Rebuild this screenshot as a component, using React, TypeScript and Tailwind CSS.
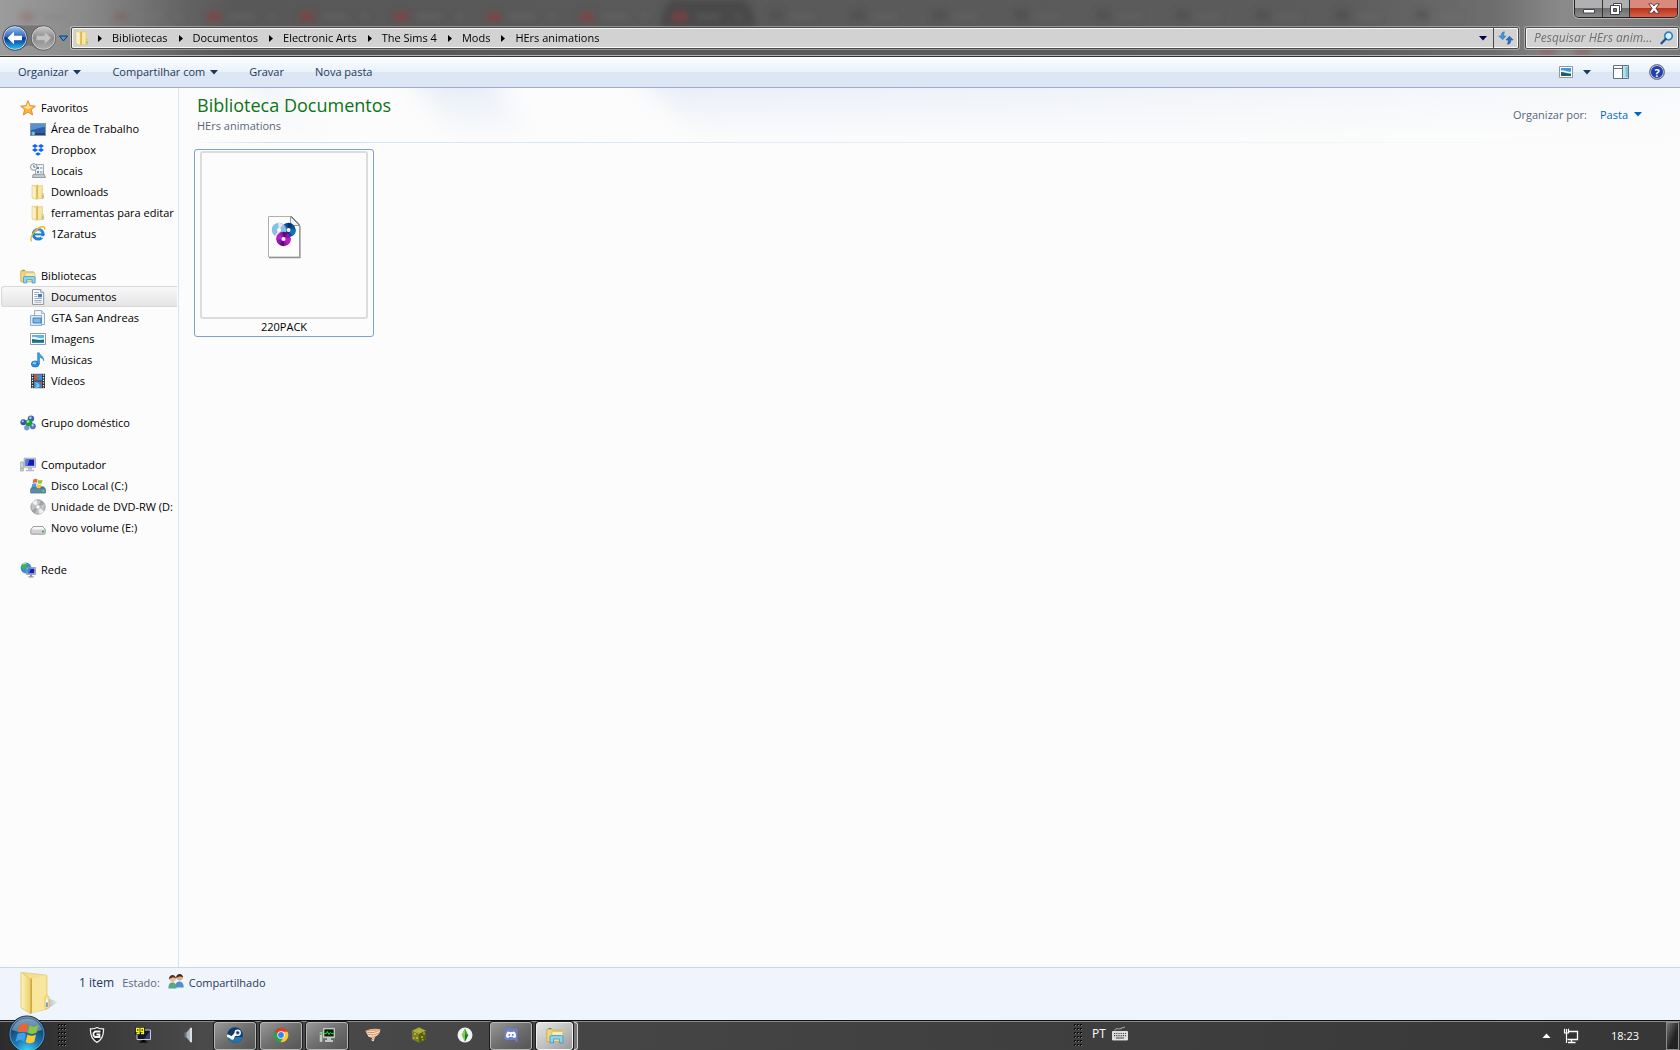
import type { ReactNode } from "react";
import clsx from "clsx";

interface IconProps {
  size?: number;
}

interface NavEntry {
  label: string;
  icon: ReactNode;
  selected?: boolean;
}

interface NavGroup extends NavEntry {
  items: NavEntry[];
}

function Svg({ size = 16, box = "0 0 16 16", children }: { size?: number; box?: string; children: ReactNode }) {
  return (
    <svg width={size} height={size} viewBox={box} className="shrink-0" aria-hidden="true">
      {children}
    </svg>
  );
}

function FolderIcon({ size = 16 }: IconProps) {
  return (
    <Svg size={size}>
      <path d="M2 1.2 8 .4v1l4.600 .3v13l-4.600 .5-6-.8z" fill="#efdc8e" />
      <path d="M7.500 2.200 12.300 1.500v12.700l-4.800.8z" fill="#f6e7a6" stroke="#d9bf66" strokeWidth=".5" />
      <path d="M2 1.1 6.300 2.600V15.600L2 13.600z" fill="#fbf1c0" stroke="#d9bf66" strokeWidth=".5" />
      <path d="M6.300 2.600 8 .8v13l-1.700 1.800z" fill="#d8b955" />
      <path d="M12 9.500h1.600v5l-1.600.4z" fill="#f5e6a0" stroke="#c9a646" strokeWidth=".4" />
      <path d="M12.400 11.500h.9v2h-.9z" fill="#4aa3e0" />
    </Svg>
  );
}

function StarIcon() {
  return (
    <Svg>
      <path d="m8 .7 2.100 5 5.300.4-4 3.500 1.200 5.300L8 12.100l-4.700 2.800 1.300-5.300-4-3.500 5.300-.4z" fill="#ffb23e" stroke="#dc7c1c" strokeWidth=".8" strokeLinejoin="round" />
      <path d="m8 2.500 1.500 4 3.600.3L8 9.300 3 6.800l3.500-.3z" fill="#ffe79c" />
    </Svg>
  );
}

function DesktopIcon() {
  return (
    <Svg>
      <rect x=".5" y="2.500" width="15" height="12" fill="#2e5fa8" stroke="#8e99a8" />
      <path d="M1 3h14v3C9 6 5 9 1 9z" fill="#5a91d2" />
      <path d="M1 12.200h14V14H1z" fill="#263f66" />
      <circle cx="3.200" cy="12.400" r="1.800" fill="#61c0e8" />
      <path d="M2.400 11.600h.8v.8h-.8z" fill="#f59231" />
      <path d="M3.400 12.400h.9v.9h-.9z" fill="#ffe14d" />
    </Svg>
  );
}

function DropboxIcon() {
  return (
    <Svg>
      <path d="m5 2 3 1.900-3 2-3-2zM11 2l3 1.900-3 2-3-2zM5 6.100l3 1.900-3 2-3-2zM11 6.100l3 1.900-3 2-3-2zM8 10.200l3 1.700-3 1.900-3-1.900z" fill="#0f63ff" />
    </Svg>
  );
}

function RecentIcon() {
  return (
    <Svg>
      <path d="M5.500 1.500h8v10h-8z" fill="#f3f6f9" stroke="#8d949b" strokeWidth=".8" />
      <path d="M7 4h2v2H7zM7 8h2v2H7z" fill="#4d8fd6" />
      <path d="M10 5h2.500M10 9h2.500" stroke="#7f8b98" />
      <path d="m3 11.500 11-.5 1.500 3.500h-13z" fill="#c4c8cc" stroke="#868c92" strokeWidth=".8" />
      <circle cx="3.800" cy="4" r="3.300" fill="#f6f7f8" stroke="#8f959b" />
      <path d="M3.800 2v2.200h1.700" fill="none" stroke="#555" strokeWidth=".8" />
    </Svg>
  );
}

function BrowserIcon() {
  return (
    <Svg>
      <circle cx="8.200" cy="8.300" r="4.800" fill="none" stroke="#1c84d8" strokeWidth="3" />
      <path d="M5 8.400h9.500" stroke="#1c84d8" strokeWidth="2" />
      <path d="M11 10.200h5v1.600h-5z" fill="#fcfcfc" />
      <path d="M5 5.500C6.500 4 9.500 3.800 11 5.200" fill="none" stroke="#7cc6f5" strokeWidth="1" />
      <path d="M1.600 15.200C-1 12 5 3.200 11 1c3-1 4.200.4 3.400 2.800" fill="none" stroke="#f2b51f" strokeWidth="1.400" />
    </Svg>
  );
}

function LibraryIcon({ size = 16 }: IconProps) {
  return (
    <Svg size={size}>
      <path d="M.7 2.800h4.400l1 1h7.400v10H.7z" fill="#efd57b" stroke="#c9a94d" strokeWidth=".7" />
      <path d="M2.300 1.800h2.500v1H2.300z" fill="#37a84b" />
      <path d="M5.200 4.800h9.800v8.500H5.200z" fill="#faedb0" stroke="#d1b45c" strokeWidth=".6" />
      <path d="M3.500 15V9.700q0-1.200 1.300-1.200h9q1.300 0 1.300 1.200V15h-3v-3.400H6.700V15z" fill="#8fd3f2" stroke="#4699c7" strokeWidth=".8" />
    </Svg>
  );
}

function DocumentIcon() {
  return (
    <Svg>
      <path d="M2.500.6h8.200l3 3v11.800H2.500z" fill="#fdfdfe" stroke="#7b8794" strokeWidth=".9" />
      <path d="M10.700.6v3h3" fill="#dfe5eb" stroke="#7b8794" strokeWidth=".8" />
      <path d="M4.300 3.500h4.500M4.300 5.500h3M4.300 7.500h3M4.300 9.500h7.500M4.300 11.500h7.500M4.300 13.200h7.500" stroke="#93a3b3" strokeWidth=".9" />
      <path d="M8 5h4v3.300H8z" fill="#3b7dc0" />
    </Svg>
  );
}

function GameLibraryIcon() {
  return (
    <Svg>
      <path d="M4.500.6h7l3 3v11H4.500z" fill="#f3f8fd" stroke="#8aa4bf" strokeWidth=".9" />
      <path d="M11.500.6v3h3" fill="#d7e5f2" stroke="#8aa4bf" strokeWidth=".8" />
      <path d="M.6 5.600h11v9.800H.6z" fill="#e6f1fb" stroke="#7d9dbd" strokeWidth=".9" />
      <path d="M3 8h8v5H3z" fill="#79b9ec" stroke="#2f79b8" strokeWidth=".9" />
    </Svg>
  );
}

function PictureIcon() {
  return (
    <Svg>
      <path d="M.5 2.500h15v11H.5z" fill="#fff" stroke="#939ba4" />
      <path d="M2 4h12v8H2z" fill="#5bb0ea" />
      <path d="M2 6.200c4-1.600 7 2 12 .6V9H2z" fill="#e6f5fd" />
      <path d="M2 8c3 0 5 1.500 12 .6V12H2z" fill="#1d6f6d" />
      <path d="M2 10.800h12V12H2z" fill="#2a8ac0" />
    </Svg>
  );
}

function MusicIcon() {
  return (
    <Svg>
      <ellipse cx="5.200" cy="12" rx="3.900" ry="3.100" fill="#2b8fdb" stroke="#1566ad" strokeWidth=".6" />
      <path d="M7.600.8h1.700c.4 2.600 4.600 3.200 4.500 8-1-2.400-2.400-3.200-4.300-3.500V12H7.600z" fill="#3da0e6" stroke="#1566ad" strokeWidth=".5" />
      <ellipse cx="4.400" cy="11.200" rx="1.800" ry="1" fill="#9bd7fa" />
    </Svg>
  );
}

function VideoIcon() {
  return (
    <Svg>
      <path d="M1 .8h14v14.400H1z" fill="#2e3338" />
      <path d="M4 1.200h8v6.200H4zM4 8.600h8v6.200H4z" fill="#3c8ed1" />
      <path d="M4 1.200h4l-2 3 4 3H4zM9 10l3-1.400v5z" fill="#b8573a" />
      <path d="m5 9 3 1 2 3-2 1.800H5l1.500-3z" fill="#6bc4f2" />
      <path d="M2.500 1.500v14M13.500 1.500v14" stroke="#eef2f5" strokeWidth="1.300" strokeDasharray="1.300 1.300" />
    </Svg>
  );
}

function HomegroupIcon() {
  return (
    <Svg>
      <circle cx="11" cy="3.600" r="3.200" fill="#3e62c0" />
      <circle cx="3.400" cy="7.200" r="3" fill="#3052b4" />
      <circle cx="12.800" cy="11.200" r="3" fill="#5373c8" />
      <circle cx="6.800" cy="12.700" r="2.700" fill="#7b98d8" />
      <circle cx="8.900" cy="7.800" r="3.500" fill="#1d9b3b" />
      <circle cx="8" cy="6.600" r="1.400" fill="#9be58e" />
      <circle cx="10.400" cy="2.800" r="1.200" fill="#b7cbf7" />
      <circle cx="2.700" cy="6.300" r="1.100" fill="#b7cbf7" />
      <circle cx="12.600" cy="10.300" r="1.100" fill="#d0defc" />
    </Svg>
  );
}

function ComputerIcon() {
  return (
    <Svg>
      <path d="M.7 5h2.600v9H.7z" fill="#dbdfe3" stroke="#8c9298" strokeWidth=".7" />
      <path d="M1.400 10.500h1v1.500h-1z" fill="#3fb74d" />
      <path d="M4.200 1.200h11.300v9H4.200z" fill="#dadde0" stroke="#949a9f" strokeWidth=".8" />
      <path d="M5.500 2.400h8.700v6.400H5.500z" fill="#0c22b4" />
      <path d="M5.500 2.400h4l-2 6.400h-2z" fill="#5a79e8" />
      <path d="M8 10.500h4v2H8zM6 12.800h8.200v1.400H6z" fill="#b7bcc1" />
    </Svg>
  );
}

function WindowsFlag() {
  return (
    <>
      <path d="M3.400 1.600C5 .6 6.200.6 7.600 1.400L6.800 5C5.400 4.300 4 4.400 2.600 5.200z" fill="#f0642b" />
      <path d="M8.300 1.700c1.500.8 2.800.7 4.300 0l-.9 3.600c-1.400.7-2.800.7-4.200-.1z" fill="#8cc63f" />
      <path d="M2.400 5.900c1.400-.8 2.800-.9 4.200-.1l-.9 3.700c-1.400-.8-2.800-.7-4.200.1z" fill="#3fa0e8" />
      <path d="M7.300 6.100c1.500.8 2.800.8 4.200 0l-.9 3.700c-1.400.8-2.800.7-4.200-.1z" fill="#fdc82f" />
    </>
  );
}

function SystemDriveIcon() {
  return (
    <Svg>
      <path d="M.7 11 2.500 8.800h11L15.400 11v4H.7z" fill="#4b7fa0" stroke="#4d5b66" strokeWidth=".7" />
      <path d="M1 11.200h14v3.500H1z" fill="#5a8ca8" />
      <path d="M12.600 11.900h1.500v2h-1.500z" fill="#66e04c" />
      <WindowsFlag />
    </Svg>
  );
}

function DiscIcon() {
  return (
    <Svg>
      <circle cx="8" cy="8" r="7.200" fill="#c2c3c4" stroke="#96989a" strokeWidth=".8" />
      <path d="M8 8 2 3.800A7 7 0 0 1 6.500 1zM8 8l6 4.200A7 7 0 0 1 9.500 15z" fill="#f0f1f1" />
      <path d="M8 8 11 1.600A7 7 0 0 1 14 5zM8 8l-3 6.400A7 7 0 0 1 2 11z" fill="#a0a2a4" />
      <circle cx="8" cy="8" r="2.200" fill="#fafafa" stroke="#999" strokeWidth=".6" />
    </Svg>
  );
}

function DriveIcon() {
  return (
    <Svg>
      <path d="m.8 9.600 2.600-3.100h9.400l2.400 3.100v3.600q0 1-1 1H1.800q-1 0-1-1z" fill="#d0d2d4" stroke="#868a8e" strokeWidth=".8" />
      <path d="M3.600 7h9l1.800 2.600H1.600z" fill="#f7f8f8" />
      <path d="M12 10.600h1.800v2H12z" fill="#35b83d" />
    </Svg>
  );
}

function NetworkIcon() {
  return (
    <Svg>
      <circle cx="6" cy="6" r="5.400" fill="#2f8fe0" />
      <path d="M2 2.600C4.500 0 7 1 8.500 2.500L6 4.500 5 8 1.500 6zM6 8l4-1v3l-2 1z" fill="#3cb54a" />
      <path d="M3 2.500c1-1 2-1.200 3-1" stroke="#c6f0ff" fill="none" />
      <path d="M6.500 5.500h9v7h-9z" fill="#d5d9dd" stroke="#80868c" strokeWidth=".7" />
      <path d="M7.600 6.600h6.800V11.400H7.600z" fill="#0b25bd" />
      <path d="M7.600 6.600h3.400l-1.800 4.800H7.600z" fill="#4d73e6" />
      <path d="M10 12.800h2v1.400h1.700v1.300H8.400v-1.300H10z" fill="#8f959b" />
    </Svg>
  );
}

function SharedIcon() {
  return (
    <Svg>
      <path d="M7.200 14.500c0-4 1.500-6 4-6s4.500 2 4.500 6z" fill="#4e8fd0" />
      <circle cx="11.600" cy="4.600" r="3" fill="#e0ab7d" />
      <path d="M8.200 5.200C7.600 0 15-.6 15.200 5c-1.200-1.600-4-2.200-7 .2z" fill="#3d2a1c" />
      <path d="M.4 15.400c0-4.400 1.400-6 4-6s4.200 1.600 4.200 6z" fill="#52a986" />
      <circle cx="4.600" cy="5.800" r="3.100" fill="#ecbd92" />
      <path d="M1.100 6.400C.4 1.200 7.600.2 8.200 6 6.600 4 4 4 1.100 6.400z" fill="#4d3521" />
    </Svg>
  );
}

function LargeFolder() {
  return (
    <svg width="40" height="44" viewBox="0 0 40 44" className="shrink-0" aria-hidden="true">
      <defs>
        <linearGradient id="fold-front" x1="0" x2="1">
          <stop offset="0" stopColor="#fff3ba" />
          <stop offset="1" stopColor="#ecd06c" />
        </linearGradient>
        <linearGradient id="fold-shade" x1="0" x2="1">
          <stop offset="0" stopColor="#8d939c" stopOpacity=".7" />
          <stop offset="1" stopColor="#8d939c" stopOpacity="0" />
        </linearGradient>
      </defs>
      <path d="m27 27 12 4-14 8z" fill="url(#fold-shade)" />
      <path d="M3 1.500 26 4q1 0 1 1.200V38l-16 4z" fill="#f3df8d" stroke="#dcc067" strokeWidth=".6" />
      <path d="M11 8 26 4v34l-15 4z" fill="#f7e69c" />
      <path d="m1 1 9.500 7V43L1 36.500z" fill="url(#fold-front)" stroke="#dabb5c" strokeWidth=".7" />
      <path d="M10.500 8 12 7v35l-1.500 1z" fill="#cfa941" />
      <path d="M25 26.500q0-2 2-2t2 2V37l-4 1.500z" fill="#f5e293" stroke="#d8b95e" strokeWidth=".6" />
      <path d="M26.200 31h1.600v5h-1.600z" fill="#5d98cf" />
      <path d="M26.200 28.500h1.600v3h-1.600z" fill="#fff" />
    </svg>
  );
}

function CapsuleDisc({ cx, cy, tones }: { cx: number; cy: number; tones: [string, string, string] }) {
  return (
    <g transform={`translate(${cx} ${cy})`}>
      <circle r="7.200" fill={tones[0]} />
      <path d="M0 0-7 1A7 7 0 0 1-4 -6zM0 0 7-1A7 7 0 0 1 4 6z" fill={tones[1]} />
      <path d="M0 0-1-7A7 7 0 0 1 4-5.600zM0 0 1 7A7 7 0 0 1-4 5.600z" fill={tones[2]} />
      <circle r="2" fill="#fff" />
    </g>
  );
}

function PackageFileIcon() {
  return (
    <svg width="34" height="44" viewBox="0 0 34 44" aria-hidden="true">
      <path d="M1.500 1.500h23l8 8.500v32h-31z" fill="#fdfdfc" stroke="#aeb0b1" />
      <path d="M2 42.600h31V11" fill="none" stroke="#8d8f90" strokeWidth="1.200" />
      <path d="M23.500 1.500v9h9z" fill="#f3f3f3" stroke="#8d8f90" strokeWidth=".9" />
      <path d="M24.500 1.500 32.500 10" stroke="#666" />
      <CapsuleDisc cx={21.5} cy={15} tones={["#07509c", "#1672b8", "#04346f"]} />
      <CapsuleDisc cx={12} cy={15} tones={["#9cb6dd", "#74c8ee", "#dfe8f6"]} />
      <CapsuleDisc cx={16.5} cy={24} tones={["#9414a8", "#b51fc8", "#5f0a7c"]} />
    </svg>
  );
}

function CaretDown({ className }: { className?: string }) {
  return (
    <svg width="8" height="5" viewBox="0 0 8 5" className={clsx("shrink-0", className)} aria-hidden="true">
      <path d="M0 0h8L4 4.500z" fill="currentColor" />
    </svg>
  );
}

const navGroups: NavGroup[] = [
  {
    label: "Favoritos",
    icon: <StarIcon />,
    items: [
      { label: "Área de Trabalho", icon: <DesktopIcon /> },
      { label: "Dropbox", icon: <DropboxIcon /> },
      { label: "Locais", icon: <RecentIcon /> },
      { label: "Downloads", icon: <FolderIcon /> },
      { label: "ferramentas para editar", icon: <FolderIcon /> },
      { label: "1Zaratus", icon: <BrowserIcon /> },
    ],
  },
  {
    label: "Bibliotecas",
    icon: <LibraryIcon />,
    items: [
      { label: "Documentos", icon: <DocumentIcon />, selected: true },
      { label: "GTA San Andreas", icon: <GameLibraryIcon /> },
      { label: "Imagens", icon: <PictureIcon /> },
      { label: "Músicas", icon: <MusicIcon /> },
      { label: "Vídeos", icon: <VideoIcon /> },
    ],
  },
  { label: "Grupo doméstico", icon: <HomegroupIcon />, items: [] },
  {
    label: "Computador",
    icon: <ComputerIcon />,
    items: [
      { label: "Disco Local (C:)", icon: <SystemDriveIcon /> },
      { label: "Unidade de DVD-RW (D:", icon: <DiscIcon /> },
      { label: "Novo volume (E:)", icon: <DriveIcon /> },
    ],
  },
  { label: "Rede", icon: <NetworkIcon />, items: [] },
];

const crumbs = ["Bibliotecas", "Documentos", "Electronic Arts", "The Sims 4", "Mods", "HErs animations"];

function GlassBackdrop() {
  return (
    <svg className="absolute inset-0 h-full w-full" viewBox="0 0 1680 57" preserveAspectRatio="none" aria-hidden="true">
      <defs>
        <linearGradient id="glass" x1="0" x2="1">
          <stop offset="0" stopColor="#9c9c9c" />
          <stop offset=".05" stopColor="#8a8a8a" />
          <stop offset=".11" stopColor="#636363" />
          <stop offset=".14" stopColor="#585858" />
          <stop offset=".8" stopColor="#5c5c5c" />
          <stop offset=".89" stopColor="#6e6e6e" />
          <stop offset=".93" stopColor="#8a8a8a" />
          <stop offset="1" stopColor="#777" />
        </linearGradient>
        <filter id="soft" x="-50%" y="-50%" width="200%" height="200%">
          <feGaussianBlur stdDeviation="3" />
        </filter>
      </defs>
      <path d="M0 0h1680v57H0z" fill="url(#glass)" />
      <g filter="url(#soft)">
        <path d="M660 28q4-28 14-28h68q10 0 14 28z" fill="#484848" />
        {[27, 121, 214, 307, 401, 494, 587, 680].map((x, i) => (
          <g key={x}>
            <ellipse cx={x} cy="17" rx="8" ry="5" fill="#8c3d3d" opacity={i < 2 ? 0.25 : 0.75} />
            <path d={`M${x + 16} 15h24v4h-24zM${x + 55} 15h6v4h-6z`} fill="#7a7a7a" opacity=".4" />
          </g>
        ))}
        {[776, 858, 939, 1021, 1103, 1182, 1262, 1342, 1422].map((x) => (
          <g key={x}>
            <ellipse cx={x} cy="15" rx="8" ry="6" fill="#444" opacity=".4" />
            <path d={`M${x + 16} 15h22v4h-22z`} fill="#757575" opacity=".4" />
          </g>
        ))}
        <ellipse cx="1548" cy="52" rx="9" ry="4" fill="#9c4c4c" opacity=".5" />
        <ellipse cx="1582" cy="52" rx="9" ry="4" fill="#9c4c4c" opacity=".5" />
      </g>
    </svg>
  );
}

function NavigationOrbs() {
  return (
    <div className="flex h-6 w-[68px] shrink-0 items-center">
      <svg width="68" height="28" viewBox="0 0 68 28" className="shrink-0" aria-hidden="true">
        <defs>
          <linearGradient id="orb" x1="0" x2="0" y1="0" y2="1">
            <stop offset="0" stopColor="#9cc0ea" />
            <stop offset=".45" stopColor="#2f67bd" />
            <stop offset=".5" stopColor="#07308c" />
            <stop offset="1" stopColor="#27c3fb" />
          </linearGradient>
          <linearGradient id="orb-off" x1="0" x2="0" y1="0" y2="1">
            <stop offset="0" stopColor="#c8c8c8" />
            <stop offset=".5" stopColor="#8b8b8b" />
            <stop offset="1" stopColor="#aeaeae" />
          </linearGradient>
        </defs>
        <path d="M15 1h28a13 13 0 0 1 13 13 13 13 0 0 1-13 13q-6 0-10-4-4-2-8 0-4 4-10 4A13 13 0 0 1 2 14 13 13 0 0 1 15 1z" fill="#777" stroke="#999" strokeWidth=".8" />
        <circle cx="15" cy="14" r="11.500" fill="url(#orb)" stroke="#dbe6f3" />
        <circle cx="15" cy="14" r="12.300" fill="none" stroke="#26324a" strokeWidth=".7" />
        <path d="M7.500 14 14 7.800v4h8v4.400h-8v4z" fill="#fff" />
        <circle cx="43.500" cy="14" r="11.500" fill="url(#orb-off)" stroke="#d7d7d7" />
        <circle cx="43.500" cy="14" r="12.300" fill="none" stroke="#555" strokeWidth=".7" />
        <path d="M51 14 44.500 7.800v4h-8v4.400h8v4z" fill="#c4c4c4" stroke="#a2a2a2" strokeWidth=".6" />
        <path d="M59.500 12h8l-4 5z" fill="#3f9be0" stroke="#143a66" />
      </svg>
    </div>
  );
}

function CaptionButtons() {
  return (
    <div className="mr-[2px] flex h-[18px] overflow-hidden rounded-b-[5px] border border-t-0 border-[#222] shadow-[0_0_0_1px_rgba(255,255,255,0.4)]">
      <button aria-label="Minimizar" className="flex w-7 items-center justify-center border-r border-[#333] bg-linear-to-b from-[#b0b0b0] from-50% via-[#6e6e6e] via-50% to-[#8c8c8c]">
        <svg width="12" height="12" viewBox="0 0 12 12">
          <path d="M.5 6.500h11v3.500H.5z" fill="#fff" stroke="#41464e" />
        </svg>
      </button>
      <button aria-label="Restaurar" className="flex w-[27px] items-center justify-center border-r border-[#333] bg-linear-to-b from-[#b0b0b0] from-50% via-[#6e6e6e] via-50% to-[#8c8c8c]">
        <svg width="12" height="12" viewBox="0 0 12 12">
          <path d="M3.500.5h8v8h-8z" fill="#fff" stroke="#41464e" />
          <path d="M.5 2.500h9v9h-9z" fill="#fff" stroke="#41464e" />
          <path d="M3.500 5.500h3v3h-3z" fill="#777" stroke="#41464e" />
        </svg>
      </button>
      <button aria-label="Fechar" className="flex w-[47px] items-center justify-center bg-linear-to-b from-[#d98a7c] from-45% via-[#b8321c] via-50% to-[#d8604a]">
        <svg width="12" height="11" viewBox="0 0 12 11">
          <path d="M.8.8h3.400L6 3 7.800.8h3.400L8 5.400l3.300 4.800H7.800L6 7.800l-1.800 2.400H.7L4 5.400z" fill="#fff" stroke="#51383a" strokeWidth=".9" />
        </svg>
      </button>
    </div>
  );
}

const glassField =
  "flex h-[22px] items-center rounded-[2px] border border-[#4b4b4b] bg-[#d2d2d2] shadow-[0_0_0_1px_rgba(255,255,255,0.35),inset_0_0_0_1px_rgba(255,255,255,0.85)]";

function TitleBar() {
  return (
    <header className="relative h-[57px] shrink-0 border-b border-[#333]">
      <GlassBackdrop />
      <div className="relative flex h-full flex-col border-b border-[#b4b4b4]">
        <div className="flex h-[26px] shrink-0 justify-end">
          <CaptionButtons />
        </div>
        <div className="flex h-6 items-center">
          <NavigationOrbs />
          <div className={clsx(glassField, "ml-[3px] min-w-0 flex-1")}>
            <nav aria-label="Caminho" className="flex min-w-0 flex-1 items-center pl-[2px]">
              <FolderIcon />
              <ol className="flex items-center pl-2">
                {crumbs.map((crumb) => (
                  <li key={crumb} className="flex items-center">
                    <svg width="4" height="7" viewBox="0 0 4 7" className="mr-[10px]" aria-hidden="true">
                      <path d="M0 0v7l4-3.500z" fill="#000" />
                    </svg>
                    <a href="#" className="mr-[11px] whitespace-nowrap text-black">
                      {crumb}
                    </a>
                  </li>
                ))}
              </ol>
            </nav>
            <button aria-label="Locais anteriores" className="flex h-full w-[21px] items-center justify-center text-[#00004a]">
              <CaretDown />
            </button>
            <button aria-label="Atualizar" className="flex h-full w-[25px] items-center justify-center border-l border-[#4b4b4b]">
              <svg width="16" height="14" viewBox="0 0 16 14">
                <path d="M6.500.8Q3 .8 3.300 5H.8L4.600 8.800 8 5H5.800Q5.600 2.500 6.500.8z" fill="#3d94dc" stroke="#2a6fb5" strokeWidth=".5" />
                <path d="M9.500 13.200q3.500 0 3.200-4.200h2.500L11.400 5.200 8 9h2.200q.2 2.500-.7 4.200z" fill="#2874c4" stroke="#174a8b" strokeWidth=".5" />
              </svg>
            </button>
          </div>
          <label className={clsx(glassField, "mr-px ml-[6px] w-[154px] pr-1 pl-2")}>
            <input
              aria-label="Pesquisar"
              placeholder="Pesquisar HErs anim..."
              className="min-w-0 flex-1 bg-transparent text-[12px] italic outline-none placeholder:text-[#707070]"
            />
            <svg width="14" height="14" viewBox="0 0 14 14" className="shrink-0" aria-hidden="true">
              <circle cx="8.500" cy="5" r="3.800" fill="#e3f1fb" stroke="#2b86d2" strokeWidth="1.700" />
              <path d="M5.800 7.800 1.500 12.300" stroke="#1d4f91" strokeWidth="2.200" strokeLinecap="round" />
            </svg>
          </label>
        </div>
      </div>
    </header>
  );
}

function CommandBar() {
  return (
    <div className="flex h-[31px] shrink-0 items-center justify-between border-b border-[#a0aecb] bg-linear-to-b from-[#fdfeff] via-[#e8f1fb] via-50% to-[#dde8f6] pr-[15px] pl-[18px] text-[#1e395b] shadow-[inset_0_-15px_0_#dce6f4]">
      <div className="flex items-center gap-[31px]">
        <button className="flex items-center gap-[5px]">
          Organizar <CaretDown />
        </button>
        <button className="flex items-center gap-[5px]">
          Compartilhar com <CaretDown />
        </button>
        <button>Gravar</button>
        <button>Nova pasta</button>
      </div>
      <div className="flex items-center">
        <button aria-label="Alterar modo de exibição">
          <svg width="14" height="12" viewBox="0 0 14 12">
            <path d="M.5.5h13v11H.5z" fill="#fff" stroke="#8d99a9" />
            <path d="M2 2h10v8H2z" fill="#3f97dd" />
            <path d="M2 4.500c4-1 6 2 10 1V8H2z" fill="#e9f6fc" />
            <path d="M2 6c4 0 6 2 10 1.500V10H2z" fill="#21605a" />
          </svg>
        </button>
        <button aria-label="Mais opções" className="ml-[10px]">
          <CaretDown />
        </button>
        <button aria-label="Mostrar painel de visualização" className="ml-[22px]">
          <svg width="16" height="14" viewBox="0 0 16 14">
            <path d="M.5.5h15v13H.5z" fill="#fff" stroke="#5c7086" />
            <path d="M1 3.500h9M9.500 1v12" stroke="#5c7086" />
            <path d="M10.500 1.500h4.500v11h-4.500z" fill="#7cc3dc" />
            <path d="M10.500 1.500h2v11h-2z" fill="#b4e0ee" />
          </svg>
        </button>
        <button aria-label="Obter ajuda" className="ml-5 flex size-4 items-center justify-center rounded-full border border-[#7c828c] bg-[#1f3fae] text-[11px] leading-none font-bold text-white shadow-[inset_0_0_0_1px_#b9c2d6]">
          ?
        </button>
      </div>
    </div>
  );
}

function NavRow({ entry, nested = false }: { entry: NavEntry; nested?: boolean }) {
  return (
    <a
      href="#"
      className={clsx(
        "ml-px flex h-[21px] items-center gap-[5px] rounded-l-[3px] border border-r-0 whitespace-nowrap text-black",
        nested ? "pl-7" : "pl-[18px]",
        entry.selected ? "border-[#d9d9d9] bg-linear-to-b from-[#f8f8f8] to-[#e5e5e5]" : "border-transparent",
      )}
    >
      {entry.icon}
      {entry.label}
    </a>
  );
}

function NavigationPane() {
  return (
    <nav aria-label="Painel de navegação" className="w-[179px] shrink-0 space-y-[21px] overflow-hidden border-r border-[#d6e5f5] pt-[9px] pr-px">
      {navGroups.map((group) => (
        <div key={group.label}>
          <NavRow entry={group} />
          {group.items.map((item) => (
            <NavRow key={item.label} entry={item} nested />
          ))}
        </div>
      ))}
    </nav>
  );
}

function LibraryHeader() {
  return (
    <div className="relative h-[55px]">
      <svg className="absolute inset-0 h-full w-full" viewBox="0 0 1500 55" preserveAspectRatio="none" aria-hidden="true">
        <defs>
          <linearGradient id="wash" x1="0" x2="0" y1="0" y2="1">
            <stop offset="0" stopColor="#e9eef7" />
            <stop offset="1" stopColor="#fcfcfc" />
          </linearGradient>
          <linearGradient id="wash-fade" x1="0" x2="1">
            <stop offset="0" stopColor="#fcfcfc" stopOpacity="0" />
            <stop offset="1" stopColor="#fcfcfc" stopOpacity=".8" />
          </linearGradient>
          <filter id="wash-soft" x="-5%" width="110%" y="0" height="100%">
            <feGaussianBlur stdDeviation="14 0" />
          </filter>
        </defs>
        <g filter="url(#wash-soft)">
          <path d="M70 0h40l30 55H90z" fill="url(#wash)" opacity=".5" />
          <path d="M240 0h80l25 55h-70z" fill="url(#wash)" />
          <path d="M470 0h1080v55H520z" fill="url(#wash)" />
        </g>
        <path d="M430 0h1070v55H430z" fill="url(#wash-fade)" />
      </svg>
      <div className="relative flex h-full items-center justify-between pr-[38px] pl-[18px]">
        <div className="flex h-full flex-col pt-[5px]">
          <h1 className="text-[18px] leading-[24px] text-[#0b7414]">Biblioteca Documentos</h1>
          <p className="leading-[18px] text-[#5a6779]">HErs animations</p>
        </div>
        <div className="flex items-center gap-[13px] pb-[2px]">
          <span className="text-[#5a6779]">Organizar por:</span>
          <button className="flex items-center gap-[6px] text-[#0066cc]">
            Pasta <CaretDown />
          </button>
        </div>
      </div>
      <div className="absolute inset-x-3 bottom-0 h-px bg-linear-to-r from-transparent via-[#cfe2f3] via-5% to-transparent" />
    </div>
  );
}

function DetailsPane() {
  return (
    <footer className="flex h-[53px] shrink-0 border-t border-[#c9d8ea] bg-[#f0f4fc] pt-[3px] pl-5 text-[#1e395b]">
      <LargeFolder />
      <div className="ml-[19px] flex h-6 items-center">
        <span className="text-[12px]">1 item</span>
        <span className="ml-2 text-[#5a6779]">Estado:</span>
        <span className="mr-[5px] ml-2 pb-1">
          <SharedIcon />
        </span>
        <span>Compartilhado</span>
      </div>
    </footer>
  );
}

function Grip() {
  return (
    <svg width="9" height="24" viewBox="0 0 9 24" className="shrink-0" aria-hidden="true">
      {[0, 4, 8, 12, 16, 20].map((y) => (
        <g key={y}>
          <path d={`M0 ${y}h2v2H0zM3 ${y}h2v2H3zM6 ${y}h2v2H6z`} fill="#0d0d0d" />
          <path d={`M1 ${y + 1}h1v1H1zM4 ${y + 1}h1v1H4zM7 ${y + 1}h1v1H7z`} fill="#858585" />
        </g>
      ))}
    </svg>
  );
}

interface TaskItem {
  name: string;
  icon: ReactNode;
  state?: "running" | "active";
}

const taskItems: TaskItem[] = [
  {
    name: "Antivírus",
    icon: (
      <Svg>
        <path d="M8 .5c2 1.300 4.500 1.500 6.500 1.300.3 6-1.500 11-6.500 13.500C3 12.800 1.200 7.800 1.500 1.800 3.500 2 6 1.800 8 .5z" fill="#222" stroke="#f0f0f0" strokeWidth="1.300" />
        <path d="M11.500 4.500H6L4.500 6v2.500L6 10h4.500V7.500H7.500" fill="none" stroke="#f4f4f4" strokeWidth="1.800" />
      </Svg>
    ),
  },
  {
    name: "Fraps",
    icon: (
      <Svg>
        <path d="M2 3h13.500v9.500H2z" fill="#101436" stroke="#c9c9c9" />
        <path d="M9 12 15 4v8z" fill="#34406f" />
        <path d="M6.500 13h4v1.500h2v1.200h-8v-1.200h2z" fill="#0a0a0a" />
        <path d="M0 .5h10v7H0z" fill="#111" />
        <path d="M4 4.500H1.500v-3H4v5H1.500M8.500 4.500H6v-3h2.500v5H6" fill="none" stroke="#f7f719" strokeWidth="1.300" />
      </Svg>
    ),
  },
  {
    name: "Volume",
    icon: (
      <Svg>
        <path d="M3.500 5.500h2v5h-2z" fill="#70777e" />
        <path d="M5.500 5.500 9.500.8v14.400l-4-4.700z" fill="#aeb8c1" />
        <path d="M9 .8h2v14.400H9z" fill="#d9e0e6" />
      </Svg>
    ),
  },
  {
    name: "Steam",
    state: "running",
    icon: (
      <Svg>
        <circle cx="8" cy="8" r="7.800" fill="#103a70" />
        <path d="M.5 10A7.800 7.800 0 0 0 15.500 10z" fill="#2375ae" />
        <path d="m0 8.500 5 2.200 4-4.200" stroke="#fff" strokeWidth="2.600" fill="none" />
        <circle cx="10.700" cy="5.800" r="3.200" fill="#fff" />
        <circle cx="10.700" cy="5.800" r="1.700" fill="#103a70" stroke="#9fb4cc" strokeWidth=".5" />
        <circle cx="5.300" cy="10.800" r="2" fill="#fff" />
      </Svg>
    ),
  },
  {
    name: "Google Chrome",
    state: "running",
    icon: (
      <Svg>
        <circle cx="8" cy="8" r="7.300" fill="#2ba24c" />
        <path d="M8 8 1.700 4.300A7.300 7.300 0 0 1 14.600 4.900z" fill="#e33b2e" />
        <path d="M8 .7a7.300 7.300 0 0 1 6.500 4H8z" fill="#e33b2e" />
        <path d="M8 4.700h6.500A7.300 7.300 0 0 1 7.600 15.300L11 9.500z" fill="#fcc934" />
        <circle cx="8" cy="8" r="3.700" fill="#fff" />
        <circle cx="8" cy="8" r="2.900" fill="#3f7ff0" />
      </Svg>
    ),
  },
  {
    name: "Gerenciador de Tarefas",
    state: "running",
    icon: (
      <Svg>
        <path d="M.5 5h3v10h-3z" fill="#c9cdc9" stroke="#777" strokeWidth=".5" />
        <path d="M1 6h1.500v2H1z" fill="#21e022" />
        <path d="M4 1h12v10H4z" fill="#dde0dd" stroke="#8d908d" strokeWidth=".6" />
        <path d="M5.300 2.300h9.400v7.200H5.300z" fill="#0a1f0c" />
        <path d="M5.300 6.500h2l1-2 1.600 3 1.500-2 1 1h2.300" fill="none" stroke="#2de832" />
        <path d="M8 11h4v2h2v2H6v-2h2z" fill="#c3c7c3" />
      </Svg>
    ),
  },
  {
    name: "Tornado",
    icon: (
      <Svg>
        <path d="M.5 4Q8 .5 15.500 2.500L14 7l-4 3-1.500 4.500-2.200-1.200 1-2.300-4-1.500z" fill="#f7e5d3" />
        <path d="M1 4.800q7 2.500 14-2M2.300 7.300q6 2 12-1.300M5 10q3 1 6-.8M7 12.500l2-.6" fill="none" stroke="#c98450" strokeWidth=".9" />
        <path d="M1 4Q8 .8 15.300 2.600 9 5 1 4z" fill="#e9a46b" />
      </Svg>
    ),
  },
  {
    name: "Minecraft",
    icon: (
      <Svg>
        <path d="m8 .5 7 3.300v8.400l-7 3.500-7-3.500V3.800z" fill="#7c7e20" />
        <path d="m8 .5 7 3.300-7 3.300-7-3.300z" fill="#a9ac3a" />
        <path d="M8 7.100v8.600l7-3.500V3.800z" fill="#5a5b14" />
        <path d="M3 6h2v2H3zM5 10h2v2H5zM2 10h1.500v2H2zM10 9h2v2h-2zM12 5.500h2v2h-2zM7 3h2v1.500H7zM4 3.500h1.500v1H4zM11 12h1.500v1.500H11z" fill="#c3c14c" opacity=".7" />
      </Svg>
    ),
  },
  {
    name: "The Sims 4",
    icon: (
      <Svg>
        <circle cx="8" cy="8" r="7.500" fill="#f0f2f3" />
        <path d="M8 1.500 11.200 8 8 14.500 4.800 8z" fill="#3f9f35" />
        <path d="M8 1.500V14.500L4.800 8z" fill="#82ce54" />
        <path d="M8 7.500 11.200 8 8 14.500z" fill="#226f2a" />
      </Svg>
    ),
  },
  {
    name: "Discord",
    state: "running",
    icon: (
      <Svg>
        <path d="M3 1.500h10q1.500 0 1.500 1.500v12.500L11.800 13H3q-1.500 0-1.500-1.500V3Q1.500 1.500 3 1.500z" fill="#6c7fd1" />
        <path d="M5.800 4.500Q4.500 4.800 4 5.300 2.800 7.500 3 10q1 1 2.300 1l.7-.9h4l.7.9q1.300 0 2.300-1 .2-2.500-1-4.700-.6-.5-1.800-.8l-.5.6H6.300z" fill="#fff" />
        <circle cx="6.300" cy="8" r="1" fill="#6c7fd1" />
        <circle cx="9.700" cy="8" r="1" fill="#6c7fd1" />
      </Svg>
    ),
  },
  { name: "Windows Explorer", state: "active", icon: <LibraryIcon size={18} /> },
];

function TaskButton({ item }: { item: TaskItem }) {
  return (
    <li className="flex w-[46px] px-[2px]">
      <button
        aria-label={item.name}
        className={clsx(
          "flex h-7 flex-1 items-center justify-center rounded-[3px] pb-px",
          item.state === "running" &&
            "border border-[#b5b5b5] bg-linear-to-br from-[#989898] via-[#6e6e6e] via-50% to-[#555] shadow-[0_0_0_1px_#1c1c1c]",
          item.state === "active" &&
            "border border-[#f2f2f2] bg-linear-to-br from-[#e6e6e6] via-[#c2c2c2] via-50% to-[#9a9a9a] shadow-[0_0_0_1px_#1c1c1c]",
        )}
      >
        {item.icon}
      </button>
      {item.state === "active" && <span className="ml-px h-7 w-1 shrink-0 rounded-r-[3px] border border-l-0 border-[#d0d0d0] bg-[#777]" />}
    </li>
  );
}

function StartOrb() {
  return (
    <button aria-label="Iniciar" className="absolute -top-[6px] left-2">
      <svg width="38" height="38" viewBox="0 0 38 38">
        <defs>
          <radialGradient id="start" cx=".5" cy="1" r=".95">
            <stop offset="0" stopColor="#3fe0ff" />
            <stop offset=".4" stopColor="#1b78b2" />
            <stop offset=".75" stopColor="#144a7c" />
            <stop offset="1" stopColor="#4d7396" />
          </radialGradient>
        </defs>
        <circle cx="19" cy="19" r="18" fill="url(#start)" stroke="#10263c" />
        <circle cx="19" cy="19" r="17" fill="none" stroke="#7fb0d0" strokeWidth=".9" opacity=".8" />
        <path d="M4 15a15.500 15.500 0 0 1 30 0Q19 20 4 15z" fill="#d5e6f3" opacity=".4" />
        <g transform="translate(4.500 7) scale(2.050)">
          <WindowsFlag />
        </g>
      </svg>
    </button>
  );
}

function Taskbar() {
  return (
    <div className="relative flex h-[30px] shrink-0 items-center border-t border-[#111] bg-linear-to-r from-[#2c2c2c] via-[#4a4a4a] via-12% to-[#373737] text-white shadow-[inset_0_1px_0_#8a8a8a]">
      <StartOrb />
      <div className="ml-[58px] flex flex-1 items-center">
        <Grip />
        <ul className="ml-[7px] flex items-center">
          {taskItems.map((item) => (
            <TaskButton key={item.name} item={item} />
          ))}
        </ul>
      </div>
      <div className="flex w-[606px] items-center">
        <Grip />
        <span className="ml-[9px] pb-1 text-[12px]">PT</span>
        <svg width="16" height="15" viewBox="0 0 16 15" className="mb-1 ml-[6px]" aria-hidden="true">
          <path d="M3 4.500C3 1 7 4 9 2.500S12 2 13 .8" fill="none" stroke="#bbb" />
          <path d="M.5 5.500h15v8.500H.5z" fill="#ddd" stroke="#f2f2f2" strokeWidth=".8" />
          <path d="M2 7.500h12M2 9.700h12" stroke="#444" strokeWidth="1.200" strokeDasharray="1.200 1" />
          <path d="M4 12h8" stroke="#444" />
        </svg>
        <div className="flex flex-1 items-center justify-end">
          <button aria-label="Mostrar ícones ocultos">
            <svg width="9" height="5" viewBox="0 0 9 5">
              <path d="M.5 5 4.500.5l4 4.500z" fill="#fff" />
            </svg>
          </button>
          <svg width="16" height="16" viewBox="0 0 16 16" className="ml-3" aria-hidden="true">
            <path d="M5 3.500h9.500v8H4.500" fill="#333" stroke="#fff" strokeWidth="1.300" />
            <path d="M5 14.500h7.500M8.500 12v2" stroke="#fff" strokeWidth="1.300" />
            <path d="M1.500.8V5h4V.8M3.500 1v4M3.500 5v10" fill="none" stroke="#fff" strokeWidth="1.200" />
          </svg>
          <time className="ml-8">18:23</time>
          <button aria-label="Mostrar área de trabalho" className="mr-px ml-[27px] h-7 w-[13px] border border-[#8b8b8b] bg-linear-to-br from-[#777] to-[#222] to-60%" />
        </div>
      </div>
    </div>
  );
}

export default function App() {
  return (
    <div className="flex h-screen flex-col overflow-hidden bg-[#fcfcfc] font-['Open_Sans','Noto_Sans',sans-serif] text-[11px] leading-4">
      <TitleBar />
      <CommandBar />
      <div className="flex min-h-0 flex-1">
        <NavigationPane />
        <main className="min-w-0 flex-1">
          <LibraryHeader />
          <ul className="flex flex-wrap pt-[6px] pl-[15px]">
            <li>
              <button className="flex h-[188px] w-[180px] flex-col items-center rounded-[3px] border border-[#7da2ce] pt-px text-black">
                <span className="flex size-[168px] items-center justify-center rounded-[3px] border-2 border-[#dcdcdc] pt-1">
                  <PackageFileIcon />
                </span>
                <span>220PACK</span>
              </button>
            </li>
          </ul>
        </main>
      </div>
      <DetailsPane />
      <Taskbar />
    </div>
  );
}
